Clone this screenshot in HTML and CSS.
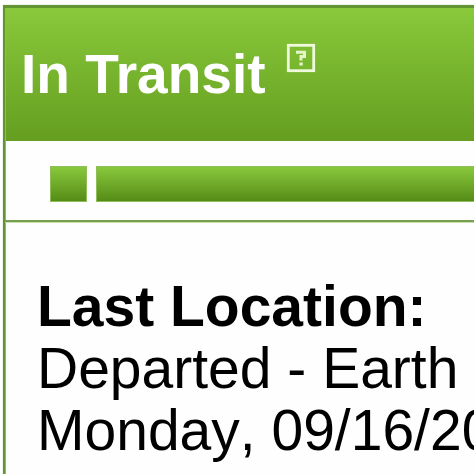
FILE: index.html
```
<!DOCTYPE html>
<html lang="en">
<head>
    <meta charset="UTF-8">
    <meta name="viewport" content="width=device-width, initial-scale=1.0">
    <title>In Transit</title>
    <link rel="stylesheet" href="styles.css">
</head>
<body>
    <div class="tracking">
        <header class="status">
            <h1>In Transit</h1>
            <svg class="help" width="30" height="30" viewBox="0 0 30 30" role="img" aria-label="Help">
                <rect x="2.3" y="2.3" width="25.4" height="25.4" fill="none" stroke="#f0f9dc" stroke-width="2.8"/>
                <path d="M10 9.3H18.5V13.5H15V17.5" fill="none" stroke="#e4f4c6" stroke-width="3"/>
                <rect x="13.4" y="19.5" width="3.4" height="3" fill="#e4f4c6"/>
            </svg>
        </header>
        <div class="progress">
            <div class="step"></div>
            <div class="step step-long"></div>
        </div>
        <section class="details">
            <h2>Last Location:</h2>
            <p>Departed - Earth</p>
            <p>Monday, 09/16/20</p>
        </section>
    </div>
</body>
</html>
```
FILE: styles.css
```
body {
    margin: 0;
    background-color: #fefefe;
    font-family: "Liberation Sans", Arial, sans-serif;
    overflow: hidden;
}

.tracking {
    box-sizing: border-box;
    height: 469px;
    margin: 5px 0 0 3px;
    border: solid #629431;
    border-width: 3px 0 0 2px;
    box-shadow: inset 1px 0 #8ebd55, 0 0 1px #a9cb87;
    overflow: hidden;
}

.status {
    display: flex;
    align-items: flex-start;
    box-sizing: border-box;
    height: 133px;
    margin-left: 1px;
    padding-left: 15px;
    background: linear-gradient(#89c93b, #659e20);
}

h1 {
    margin: 35px 0 0;
    color: #fff;
    font-size: 55px;
    line-height: 63px;
}

.help {
    margin: 35px 0 0 20px;
}

.progress {
    display: flex;
    gap: 9px;
    box-sizing: border-box;
    height: 81px;
    padding: 25px 0 0 45px;
    border-bottom: 2px solid #769f50;
    box-shadow: 0 1px #c5deaa;
}

.step {
    flex: none;
    box-sizing: border-box;
    width: 37px;
    height: 36px;
    border: 1px solid #8fbd5a;
    background: linear-gradient(#88c83c, #568c17);
}

.step-long {
    flex: 1;
    border-right: 0;
}

.details {
    padding: 53px 0 0 32px;
    color: #000;
    font-size: 57px;
    font-kerning: none;
    line-height: 62px;
    white-space: nowrap;
}

h2,
p {
    margin: 0;
    font-size: inherit;
}
```
